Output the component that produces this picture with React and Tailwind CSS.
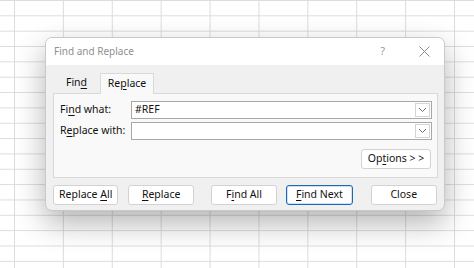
import React from "react";

const U = ({ children }) => <span className="underline underline-offset-2">{children}</span>;

const Chevron = () => (
  <svg width="9" height="6" viewBox="0 0 9 6" fill="none" stroke="#6e6e6e" strokeWidth="1">
    <path d="M1 1l3.5 3.5L8 1" />
  </svg>
);

const Combo = ({ value }) => (
  <div className="flex h-[18px] w-[301px] items-stretch border border-[#a8a8a8] bg-white">
    <div className="flex flex-1 items-center pl-[3px] text-[10.5px] text-[#111]">{value}</div>
    <div className="m-px flex w-[15px] items-center justify-center border border-[#d4d4d4] bg-white">
      <Chevron />
    </div>
  </div>
);

const Btn = ({ children, primary, w = "w-[67px]" }) => (
  <button
    className={`${w} h-[20px] rounded-[3px] bg-white text-[10.5px] text-[#111] ${
      primary ? "border border-[#1b68b8] shadow-[inset_0_0_0_1px_#cfe0f3]" : "border border-[#d2d2d2]"
    }`}
  >
    {children}
  </button>
);

export default function App() {
  return (
    <div
      className="h-[268px] w-[474px] overflow-hidden bg-white bg-[linear-gradient(to_right,#dcdcdc_1px,transparent_1px),linear-gradient(to_bottom,#dcdcdc_1px,transparent_1px)] bg-size-[48.9px_15.35px] bg-position-[14px_0px] pl-[45px] pt-[37px]"
      style={{ fontFamily: '"Noto Sans", "Open Sans", sans-serif' }}
    >
      <div className="flex h-[174px] w-[400px] flex-col overflow-hidden rounded-[7px] border border-[#c9c9c9] bg-[#f0f0f0] shadow-[0_12px_30px_rgba(0,0,0,0.3)]">
        {/* title bar */}
        <div className="flex h-[27px] items-center bg-white pl-[8px] pr-[14px]">
          <span className="flex-1 text-[10px] text-[#8f8f8f]">Find and Replace</span>
          <span className="mr-[34px] text-[11px] text-[#9a9a9a]">?</span>
          <svg width="11" height="11" viewBox="0 0 11 11" stroke="#8a8a8a" strokeWidth="1">
            <path d="M0.5 0.5l10 10M10.5 0.5l-10 10" />
          </svg>
        </div>

        <div className="flex flex-1 flex-col px-[7px] pt-[8px]">
          {/* tabs */}
          <div className="flex h-[20px] items-end">
            <div className="flex h-[20px] w-[47px] items-center justify-center text-[10.5px] text-[#111]">
              Fin<U>d</U>
            </div>
            <div className="relative z-10 -mb-px flex h-[21px] w-[54px] items-center justify-center border border-b-0 border-[#d9d9d9] bg-[#f9f9f9] pb-px text-[10.5px] text-[#111]">
              Re<U>p</U>lace
            </div>
          </div>

          {/* panel */}
          <div className="flex h-[85px] w-[385px] flex-col border border-[#d9d9d9] bg-[#f9f9f9] pl-[6px] pr-[5px] pt-[7px]">
            <div className="flex items-center">
              <span className="w-[71px] text-[10.5px] text-[#111]">
                Fi<U>n</U>d what:
              </span>
              <Combo value="#REF" />
            </div>
            <div className="mt-[3px] flex items-center">
              <span className="w-[71px] text-[10.5px] text-[#111]">
                R<U>e</U>place with:
              </span>
              <Combo value="" />
            </div>
            <div className="mt-[9px] flex justify-end pr-[1px]">
              <Btn w="w-[70px]">
                Op<U>t</U>ions &gt; &gt;
              </Btn>
            </div>
          </div>

          {/* buttons */}
          <div className="mt-[7px] flex items-center">
            <Btn w="w-[66px]">
              Replace <U>A</U>ll
            </Btn>
            <div className="w-[10px]" />
            <Btn w="w-[66px]">
              <U>R</U>eplace
            </Btn>
            <div className="w-[17px]" />
            <Btn>
              F<U>i</U>nd All
            </Btn>
            <div className="w-[9px]" />
            <Btn primary>
              <U>F</U>ind Next
            </Btn>
            <div className="w-[18px]" />
            <Btn>Close</Btn>
          </div>
        </div>
      </div>
    </div>
  );
}
